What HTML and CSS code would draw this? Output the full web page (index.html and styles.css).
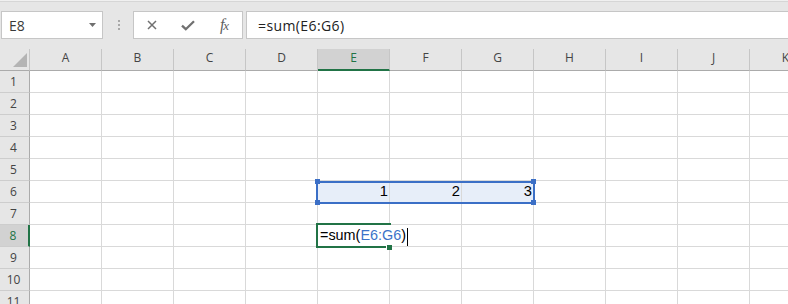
FILE: index.html
```html
<!DOCTYPE html>
<html>
<head>
<meta charset="utf-8">
<link rel="stylesheet" href="styles.css">
</head>
<body>
<div class="page">
  <div class="toolbar">
    <div class="namebox">
      <span class="nb-text">E8</span>
      <svg class="nb-arrow" width="7" height="4" viewBox="0 0 7 4"><path d="M0 0H7L3.5 4Z" fill="#6f6f6f"/></svg>
    </div>
    <div class="grip">
      <svg width="2" height="10" viewBox="0 0 2 10"><rect x="0" y="0" width="2" height="2" fill="#a8a8a8"/><rect x="0" y="4" width="2" height="2" fill="#a8a8a8"/><rect x="0" y="8" width="2" height="2" fill="#a8a8a8"/></svg>
    </div>
    <div class="fbuttons">
      <div class="fbtn"><svg width="10" height="10" viewBox="0 0 10 10"><path d="M1 1L9 9M9 1L1 9" stroke="#707070" stroke-width="1.5" fill="none"/></svg></div>
      <div class="fbtn"><svg width="14" height="11" viewBox="0 0 14 11"><path d="M1 5.6L4.8 9.2L13 1.2" stroke="#707070" stroke-width="2.3" fill="none"/></svg></div>
      <div class="fbtn"><span class="fx">f<span class="fx-x">x</span></span></div>
    </div>
    <div class="formula"><span class="ftext">=sum(E6:G6)</span></div>
  </div>
  <div class="sheet">
    <div class="corner"><div class="tri"></div></div>
    <div class="c ch">A</div><div class="c ch">B</div><div class="c ch">C</div><div class="c ch">D</div><div class="c ch sel">E</div><div class="c ch">F</div><div class="c ch">G</div><div class="c ch">H</div><div class="c ch">I</div><div class="c ch">J</div><div class="c ch">K</div>

    <div class="c rh">1</div><div class="c"></div><div class="c"></div><div class="c"></div><div class="c"></div><div class="c"></div><div class="c"></div><div class="c"></div><div class="c"></div><div class="c"></div><div class="c"></div><div class="c"></div>
    <div class="c rh">2</div><div class="c"></div><div class="c"></div><div class="c"></div><div class="c"></div><div class="c"></div><div class="c"></div><div class="c"></div><div class="c"></div><div class="c"></div><div class="c"></div><div class="c"></div>
    <div class="c rh">3</div><div class="c"></div><div class="c"></div><div class="c"></div><div class="c"></div><div class="c"></div><div class="c"></div><div class="c"></div><div class="c"></div><div class="c"></div><div class="c"></div><div class="c"></div>
    <div class="c rh">4</div><div class="c"></div><div class="c"></div><div class="c"></div><div class="c"></div><div class="c"></div><div class="c"></div><div class="c"></div><div class="c"></div><div class="c"></div><div class="c"></div><div class="c"></div>
    <div class="c rh">5</div><div class="c"></div><div class="c"></div><div class="c"></div><div class="c"></div><div class="c"></div><div class="c"></div><div class="c"></div><div class="c"></div><div class="c"></div><div class="c"></div><div class="c"></div>
    <div class="c rh">6</div><div class="c"></div><div class="c"></div><div class="c"></div><div class="c"></div><div class="c num inrange">1</div><div class="c num inrange">2</div><div class="c num inrange">3</div><div class="c"></div><div class="c"></div><div class="c"></div><div class="c"></div>
    <div class="c rh">7</div><div class="c"></div><div class="c"></div><div class="c"></div><div class="c"></div><div class="c"></div><div class="c"></div><div class="c"></div><div class="c"></div><div class="c"></div><div class="c"></div><div class="c"></div>
    <div class="c rh sel">8</div><div class="c"></div><div class="c"></div><div class="c"></div><div class="c"></div><div class="c edit"><span class="etext">=sum(<span class="ref">E6:G6</span>)</span><span class="caret"></span></div><div class="c"></div><div class="c"></div><div class="c"></div><div class="c"></div><div class="c"></div><div class="c"></div>
    <div class="c rh">9</div><div class="c"></div><div class="c"></div><div class="c"></div><div class="c"></div><div class="c"></div><div class="c"></div><div class="c"></div><div class="c"></div><div class="c"></div><div class="c"></div><div class="c"></div>
    <div class="c rh">10</div><div class="c"></div><div class="c"></div><div class="c"></div><div class="c"></div><div class="c"></div><div class="c"></div><div class="c"></div><div class="c"></div><div class="c"></div><div class="c"></div><div class="c"></div>
    <div class="c rh">11</div><div class="c"></div><div class="c"></div><div class="c"></div><div class="c"></div><div class="c"></div><div class="c"></div><div class="c"></div><div class="c"></div><div class="c"></div><div class="c"></div><div class="c"></div>

    <div class="range">
      <div class="handle h-tl"></div><div class="handle h-tr"></div><div class="handle h-bl"></div><div class="handle h-br"></div>
    </div>
    <div class="active"><div class="fill"></div></div>
  </div>
</div>
</body>
</html>
```

FILE: styles.css
```css
html, body {
  margin: 0;
  padding: 0;
  background: #ffffff;
}
.page {
  width: 788px;
  height: 304px;
  overflow: hidden;
  font-family: "Open Sans", "Noto Sans", sans-serif;
}
.toolbar {
  height: 49px;
  box-sizing: border-box;
  border-top: 1px solid #f0f0f0;
  box-shadow: inset 0 1px 0 #d6d6d6;
  background: #e6e6e6;
  padding: 10px 0 0 1px;
  display: flex;
  align-items: flex-start;
  width: 830px;
}
.namebox {
  width: 102px;
  height: 28px;
  box-sizing: border-box;
  border: 1px solid #c6c6c6;
  background: #ffffff;
  display: flex;
  align-items: center;
  justify-content: space-between;
  padding: 0 6px 0 7px;
  flex: none;
}
.nb-text {
  font-size: 14px;
  color: #3a3a3a;
}
.nb-arrow { display: block; }
.grip {
  width: 30px;
  height: 28px;
  display: flex;
  align-items: center;
  justify-content: center;
  padding-left: 1px;
  box-sizing: border-box;
  flex: none;
}
.grip svg { display: block; }
.fbuttons {
  width: 110px;
  height: 28px;
  box-sizing: border-box;
  border: 1px solid #c6c6c6;
  background: #ffffff;
  display: flex;
  flex: none;
}
.fbtn {
  width: 36px;
  display: flex;
  align-items: center;
  justify-content: center;
}
.fbtn svg { display: block; }
.fx {
  font-family: "Liberation Serif", serif;
  font-style: italic;
  font-size: 16px;
  color: #5f5f5f;
  line-height: 1;
  letter-spacing: -1px;
}
.fx-x {
  font-size: 13px;
}
.formula {
  margin-left: 3px;
  width: 560px;
  height: 28px;
  box-sizing: border-box;
  border: 1px solid #c6c6c6;
  background: #ffffff;
  display: flex;
  align-items: center;
  padding-left: 11px;
  flex: none;
}
.ftext {
  font-size: 14px;
  letter-spacing: 0.4px;
  color: #222222;
}

.sheet {
  position: relative;
  display: grid;
  grid-template-columns: 30px repeat(11, 72px);
  grid-auto-rows: 22px;
  width: 822px;
}
.corner {
  box-sizing: border-box;
  background: #e6e6e6;
  border-right: 1px solid #c6c6c6;
  border-bottom: 1px solid #ababab;
  display: flex;
  justify-content: flex-end;
  align-items: flex-end;
  padding: 0 2px 3px 0;
}
.tri {
  width: 14px;
  height: 14px;
  background: #b4b4b4;
  clip-path: polygon(100% 0, 100% 100%, 0 100%);
}
.c {
  box-sizing: border-box;
  border-right: 1px solid #d9d9d9;
  border-bottom: 1px solid #d9d9d9;
  font-family: "Liberation Sans", Arial, sans-serif;
  font-size: 14.7px;
  line-height: 17px;
  color: #000000;
  display: flex;
  align-items: flex-end;
  padding: 0 1px 2px 2px;
  white-space: nowrap;
}
.num { justify-content: flex-end; }
.inrange { background: #e7eef9; }
.ch {
  background: #e6e6e6;
  border-right-color: #c6c6c6;
  border-bottom-color: #ababab;
  font-family: "Open Sans", "Noto Sans", sans-serif;
  font-size: 12px;
  line-height: 16px;
  color: #444444;
  justify-content: center;
  align-items: center;
  padding: 0 0 3px 0;
}
.ch.sel {
  background: #d2d2d2;
  border-bottom: 2px solid #217346;
  color: #217346;
  padding-bottom: 2px;
}
.rh {
  background: #e6e6e6;
  border-right-color: #ababab;
  border-bottom-color: #cdcdcd;
  font-family: "Open Sans", "Noto Sans", sans-serif;
  font-size: 12px;
  line-height: 16px;
  color: #444444;
  justify-content: center;
  align-items: center;
  padding: 0 2px 0 0;
}
.rh.sel {
  background: #d2d2d2;
  border-right: 2px solid #217346;
  color: #217346;
}
.edit {
  border-right-color: transparent;
  overflow: visible;
  padding-left: 2px;
  font-size: 14.4px;
}
.etext { flex: none; }
.ref { color: #3b73c9; }
.caret {
  flex: none;
  display: block;
  width: 1px;
  height: 18px;
  background: #000000;
  margin-left: 1px;
  margin-bottom: -2px;
}
.range {
  position: absolute;
  left: 316px;
  top: 132px;
  width: 219px;
  height: 23px;
  box-sizing: border-box;
  border: 2px solid #3b6fc6;
}
.handle {
  position: absolute;
  width: 5px;
  height: 5px;
  background: #3b6fc6;
}
.h-tl { left: -3px; top: -4px; }
.h-tr { right: -3px; top: -4px; }
.h-bl { left: -3px; bottom: -3px; }
.h-br { right: -3px; bottom: -3px; }
.active {
  position: absolute;
  left: 316px;
  top: 174px;
  width: 75px;
  height: 25px;
  box-sizing: border-box;
  border: 2px solid #217346;
  border-right: none;
}
.fill {
  position: absolute;
  left: 69px;
  top: 20px;
  width: 5px;
  height: 5px;
  background: #217346;
  box-shadow: -1px -1px 0 #ffffff;
}
```
